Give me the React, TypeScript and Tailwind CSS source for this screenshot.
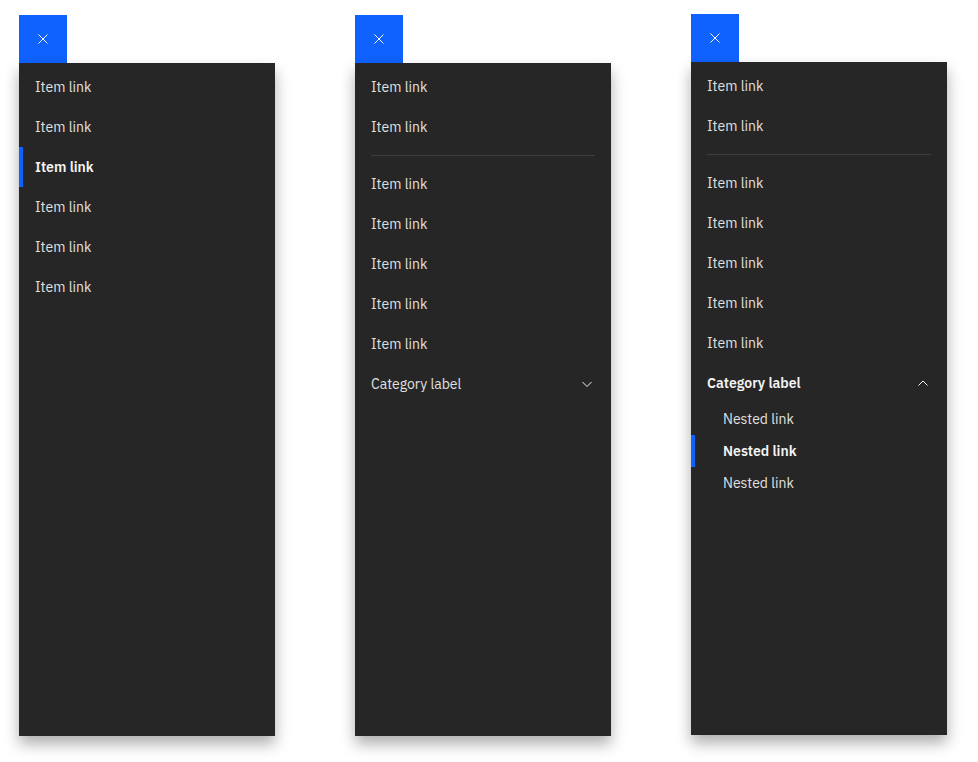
import { useState } from 'react'

type Entry =
  | { kind: 'link'; label: string; active?: boolean }
  | { kind: 'divider' }
  | { kind: 'category'; label: string; open: boolean; items: { label: string; active?: boolean }[] }

const FONT = { fontFamily: '"IBM Plex Sans", "Noto Sans", "Open Sans", sans-serif' }

function CloseIcon() {
  return (
    <svg width="16" height="16" viewBox="0 0 16 16" fill="none" stroke="white" strokeWidth="1">
      <path d="M3.5 3.5l9 9M12.5 3.5l-9 9" />
    </svg>
  )
}

function Chevron({ up }: { up?: boolean }) {
  return (
    <svg width="16" height="16" viewBox="0 0 16 16" fill="none" stroke="#f4f4f4" strokeWidth="1">
      {up ? <path d="M3.5 10.5L8 6l4.5 4.5" /> : <path d="M3.5 6L8 10.5 12.5 6" />}
    </svg>
  )
}

function Link({ label, active, nested }: { label: string; active?: boolean; nested?: boolean }) {
  return (
    <a
      href="#"
      className={`relative flex items-center text-sm ${nested ? 'h-8 pl-8' : 'h-10 pl-4'} ${
        active ? 'font-semibold text-[#f4f4f4]' : 'text-[#e0e0e0]'
      }`}
    >
      {active && <span className="absolute left-0 top-0 h-full w-1 bg-[#0f62fe]" />}
      {label}
    </a>
  )
}

function Category({ entry }: { entry: Extract<Entry, { kind: 'category' }> }) {
  const [open, setOpen] = useState(entry.open)
  return (
    <div>
      <button
        onClick={() => setOpen(!open)}
        className={`flex h-10 w-full items-center justify-between pl-4 pr-4 text-sm ${
          open ? 'font-semibold text-[#f4f4f4]' : 'text-[#e0e0e0]'
        }`}
      >
        <span>{entry.label}</span>
        <Chevron up={open} />
      </button>
      {open && entry.items.map((n, i) => <Link key={i} label={n.label} active={n.active} nested />)}
    </div>
  )
}

function Menu({ entries, className = '' }: { entries: Entry[]; className?: string }) {
  return (
    <div className={`flex flex-col ${className}`}>
      <button className="flex h-12 w-12 items-center justify-center bg-[#0f62fe]">
        <CloseIcon />
      </button>
      <nav className="h-[673px] w-64 bg-[#262626] pt-1 shadow-[0_8px_14px_rgba(0,0,0,0.32)]">
        {entries.map((e, i) => {
          if (e.kind === 'divider') return <div key={i} className="mx-4 my-2 h-px bg-[#3d3d3d]" />
          if (e.kind === 'category') return <Category key={i} entry={e} />
          return <Link key={i} label={e.label} active={e.active} />
        })}
      </nav>
    </div>
  )
}

const link = (active = false): Entry => ({ kind: 'link', label: 'Item link', active })

const MENU_A: Entry[] = [link(), link(), link(true), link(), link(), link()]

const MENU_B: Entry[] = [
  link(), link(), { kind: 'divider' }, link(), link(), link(), link(), link(),
  { kind: 'category', label: 'Category label', open: false, items: [] },
]

const MENU_C: Entry[] = [
  link(), link(), { kind: 'divider' }, link(), link(), link(), link(), link(),
  {
    kind: 'category',
    label: 'Category label',
    open: true,
    items: [{ label: 'Nested link' }, { label: 'Nested link', active: true }, { label: 'Nested link' }],
  },
]

export default function App() {
  return (
    <div className="flex h-[762px] w-[978px] items-start gap-20 bg-white pl-[19px] pt-[15px]" style={FONT}>
      <Menu entries={MENU_A} />
      <Menu entries={MENU_B} />
      <Menu entries={MENU_C} className="-mt-px" />
    </div>
  )
}
